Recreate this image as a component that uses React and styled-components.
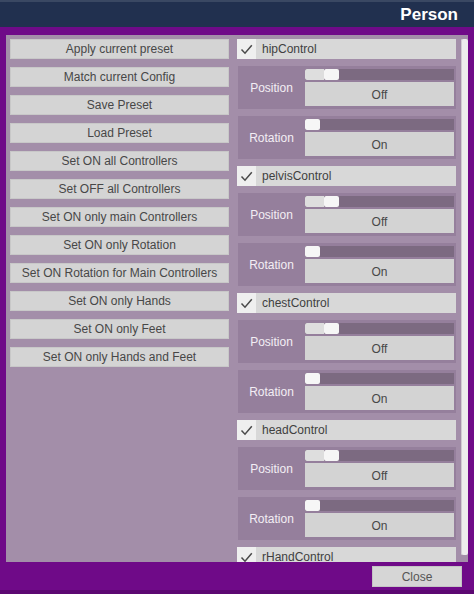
import React from "react";
import styled, { createGlobalStyle } from "styled-components";

const Global = createGlobalStyle`
  html, body { margin: 0; padding: 0; background: #700a8a; }
  body { font-family: "Liberation Sans", Arial, sans-serif; }
  * { box-sizing: border-box; }
`;

const Window = styled.div`
  width: 474px;
  height: 594px;
  display: flex;
  flex-direction: column;
  background: #6f0a88;
  overflow: hidden;
`;

const Header = styled.div`
  height: 27px;
  flex: none;
  background: #21304f;
  border-top: 2px solid #3a4863;
  display: flex;
  align-items: center;
  justify-content: flex-end;
  padding-right: 16px;
  color: #ffffff;
  font-weight: bold;
  font-size: 17px;
`;

const Body = styled.div`
  flex: 1;
  min-height: 0;
  padding: 8px 6px 0 6px;
  display: flex;
`;

const Content = styled.div`
  flex: 1;
  background: #a38ea9;
  display: flex;
  padding: 4px 0 0 4px;
  gap: 8px;
  overflow: hidden;
`;

const LeftColumn = styled.div`
  width: 219px;
  flex: none;
  display: flex;
  flex-direction: column;
  gap: 8px;
`;

const ActionButton = styled.div`
  height: 20px;
  background: #d4d4d4;
  color: #474747;
  font-size: 12px;
  display: flex;
  align-items: center;
  justify-content: center;
  box-shadow: inset 0 0 0 1px #c8c8c8;
`;

const RightColumn = styled.div`
  width: 219px;
  flex: none;
  display: flex;
  flex-direction: column;
  overflow: hidden;
`;

const ControlBlock = styled.div`
  display: flex;
  flex-direction: column;
  gap: 7px;
  margin-bottom: 7px;
  flex: none;
`;

const Toggle = styled.div`
  height: 20px;
  display: flex;
  background: #d8d8d8;
  flex: none;
`;

const CheckBox = styled.div`
  width: 19px;
  flex: none;
  background: #efefef;
  display: flex;
  align-items: center;
  justify-content: center;
`;

const ToggleLabel = styled.div`
  flex: 1;
  padding-left: 6px;
  display: flex;
  align-items: center;
  font-size: 12px;
  color: #3f3f3f;
`;

const Group = styled.div`
  height: 43px;
  background: #957f9c;
  display: flex;
  padding: 3px 2px 3px 0;
  margin-left: 1px;
`;

const GroupLabel = styled.div`
  width: 67px;
  flex: none;
  display: flex;
  align-items: center;
  justify-content: center;
  color: #f3eef4;
  font-size: 12px;
`;

const GroupControls = styled.div`
  flex: 1;
  display: flex;
  flex-direction: column;
  gap: 2px;
`;

const Track = styled.div`
  height: 11px;
  background: #7c6a81;
  display: flex;
  flex: none;
`;

const Fill = styled.div`
  background: #dedede;
  border-radius: 2px 0 0 2px;
`;

const Thumb = styled.div`
  width: 15px;
  background: #f6f6f6;
  border-radius: 2px;
`;

const StateButton = styled.div`
  flex: 1;
  background: #d3d3d3;
  color: #484848;
  font-size: 12px;
  display: flex;
  align-items: center;
  justify-content: center;
  padding-top: 2px;
`;

const ScrollTrack = styled.div`
  width: 7px;
  flex: none;
  margin-left: -3px;
  padding-bottom: 7px;
  display: flex;
`;

const ScrollThumb = styled.div`
  flex: 1;
  background: #ededed;
  border-radius: 2px;
  box-shadow: inset 1px 0 0 #d0cbd2;
`;

const Footer = styled.div`
  height: 32px;
  flex: none;
  display: flex;
  justify-content: flex-end;
  align-items: flex-start;
  padding: 4px 12px 0 0;
  border-bottom: 4px solid #5c0872;
`;

const CloseButton = styled.div`
  width: 90px;
  height: 21px;
  background: #d6d6d6;
  color: #555555;
  font-size: 12px;
  display: flex;
  align-items: center;
  justify-content: center;
  box-shadow: inset 0 0 0 1px #c4c4c4;
`;

const actions = [
  "Apply current preset",
  "Match current Config",
  "Save Preset",
  "Load Preset",
  "Set ON all Controllers",
  "Set OFF all Controllers",
  "Set ON only main Controllers",
  "Set ON only Rotation",
  "Set ON Rotation for Main Controllers",
  "Set ON only Hands",
  "Set ON only Feet",
  "Set ON only Hands and Feet",
];

const controls = ["hipControl", "pelvisControl", "chestControl", "headControl", "rHandControl"];

const Check = () => (
  <svg width="13" height="11" viewBox="0 0 13 11">
    <path d="M1.5 5.5 L5 9.2 L11.8 1.2" fill="none" stroke="#4a4a4a" strokeWidth="1.5" />
  </svg>
);

const Slider = ({ fill }) => (
  <Track>
    {fill > 0 && <Fill style={{ width: fill }} />}
    <Thumb />
  </Track>
);

const ControlGroup = ({ label, fill, state }) => (
  <Group>
    <GroupLabel>{label}</GroupLabel>
    <GroupControls>
      <Slider fill={fill} />
      <StateButton>{state}</StateButton>
    </GroupControls>
  </Group>
);

export default function App() {
  return (
    <>
      <Global />
      <Window>
        <Header>Person</Header>
        <Body>
          <Content>
            <LeftColumn>
              {actions.map((a) => (
                <ActionButton key={a}>{a}</ActionButton>
              ))}
            </LeftColumn>
            <RightColumn>
              {controls.map((c) => (
                <ControlBlock key={c}>
                  <Toggle>
                    <CheckBox>
                      <Check />
                    </CheckBox>
                    <ToggleLabel>{c}</ToggleLabel>
                  </Toggle>
                  <ControlGroup label="Position" fill={19} state="Off" />
                  <ControlGroup label="Rotation" fill={0} state="On" />
                </ControlBlock>
              ))}
            </RightColumn>
            <ScrollTrack>
              <ScrollThumb />
            </ScrollTrack>
          </Content>
        </Body>
        <Footer>
          <CloseButton>Close</CloseButton>
        </Footer>
      </Window>
    </>
  );
}
